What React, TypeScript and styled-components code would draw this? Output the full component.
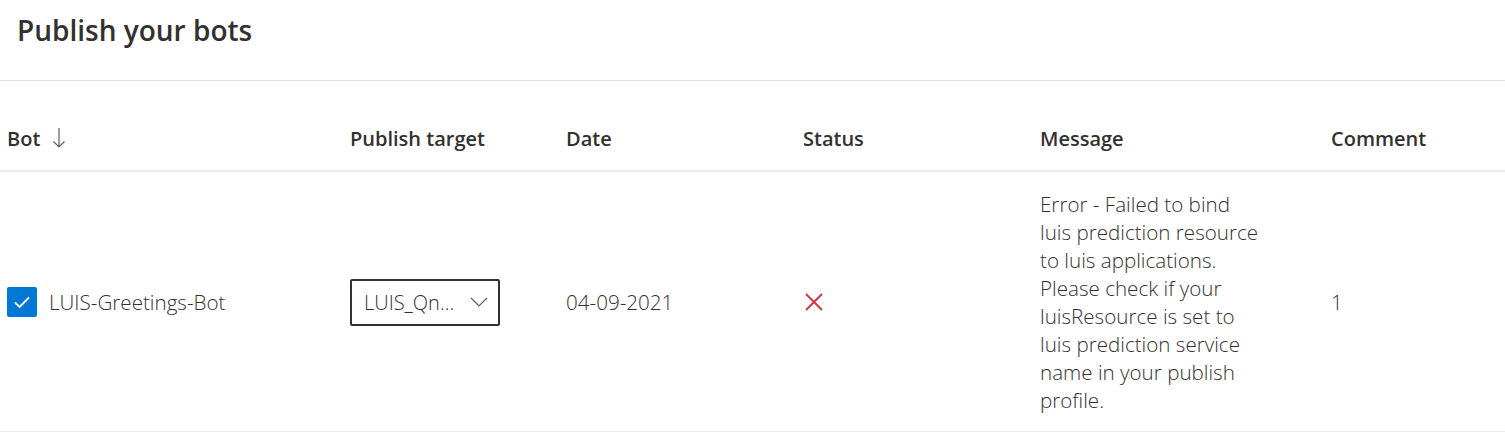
import styled, { createGlobalStyle } from "styled-components";

const GlobalStyle = createGlobalStyle`
  body {
    margin: 0;
    background: #ffffff;
    font-family: "Open Sans", "Noto Sans", sans-serif;
    color: #323130;
  }
`;

const columns = "343px 216px 237px 237px 291px 1fr";

const messageLines = [
  "Error - Failed to bind",
  "luis prediction resource",
  "to luis applications.",
  "Please check if your",
  "luisResource is set to",
  "luis prediction service",
  "name in your publish",
  "profile.",
];

export default function App() {
  return (
    <Page>
      <GlobalStyle />
      <TitleBar>
        <Title>Publish your bots</Title>
      </TitleBar>
      <Table>
        <HeaderRow>
          <HeaderCell>
            Bot
            <svg width="14" height="22" viewBox="0 0 14 22">
              <path
                d="M7 1 V20 M1.5 14.5 L7 20 L12.5 14.5"
                fill="none"
                stroke="#605e5c"
                strokeWidth="1.2"
              />
            </svg>
          </HeaderCell>
          <HeaderCell>Publish target</HeaderCell>
          <HeaderCell>Date</HeaderCell>
          <HeaderCell>Status</HeaderCell>
          <HeaderCell>Message</HeaderCell>
          <HeaderCell>Comment</HeaderCell>
        </HeaderRow>
        <BodyRow>
          <Cell>
            <Checkbox>
              <svg width="20" height="20" viewBox="0 0 20 20">
                <path
                  d="M3 10.5 L7.6 15 L17 5.5"
                  fill="none"
                  stroke="#fff"
                  strokeWidth="1.8"
                />
              </svg>
            </Checkbox>
            <span>LUIS-Greetings-Bot</span>
          </Cell>
          <Cell>
            <Dropdown>
              <span>LUIS_Qn...</span>
              <svg width="18" height="10" viewBox="0 0 18 10">
                <path d="M1 1 L9 9 L17 1" fill="none" stroke="#605e5c" strokeWidth="1.2" />
              </svg>
            </Dropdown>
          </Cell>
          <Cell>04-09-2021</Cell>
          <Cell>
            <svg width="18" height="18" viewBox="0 0 18 18" style={{ marginLeft: 2 }}>
              <path d="M1 1 L17 17 M17 1 L1 17" stroke="#d13438" strokeWidth="1.8" />
            </svg>
          </Cell>
          <Cell>
            <Message>
              {messageLines.map((line) => (
                <MessageLine key={line}>{line}</MessageLine>
              ))}
            </Message>
          </Cell>
          <Cell>1</Cell>
        </BodyRow>
      </Table>
    </Page>
  );
}

const Page = styled.div`
  width: 1505px;
  min-height: 433px;
  background: #fff;
`;

const TitleBar = styled.div`
  height: 81px;
  border-bottom: 1px solid #e1dfdd;
  padding: 9px 0 0 17px;
  box-sizing: border-box;
`;

const Title = styled.h1`
  margin: 0;
  font-size: 28px;
  font-weight: 570;
  line-height: 42px;
  color: #323130;
`;

const Table = styled.div`
  padding-top: 29px;
`;

const HeaderRow = styled.div`
  display: grid;
  grid-template-columns: ${columns};
  height: 60px;
  box-sizing: content-box;
  border-bottom: 2px solid #edebe9;
  padding-left: 7px;
`;

const HeaderCell = styled.div`
  display: flex;
  align-items: center;
  padding-bottom: 4px;
  font-size: 20px;
  font-weight: 600;
  color: #323130;
  gap: 12px;
`;

const BodyRow = styled.div`
  display: grid;
  grid-template-columns: ${columns};
  border-bottom: 1px solid #edebe9;
  padding: 18px 0 17px 7px;
`;

const Cell = styled.div`
  display: flex;
  align-items: center;
  font-size: 20.6px;
  font-weight: 350;
  color: #323130;
  gap: 12px;
`;

const Checkbox = styled.div`
  width: 30px;
  height: 30px;
  border-radius: 2px;
  background: #0078d4;
  display: flex;
  align-items: center;
  justify-content: center;
  flex-shrink: 0;
`;

const Dropdown = styled.div`
  width: 150px;
  height: 47px;
  box-sizing: border-box;
  border: 2px solid #323130;
  border-radius: 2px;
  display: flex;
  align-items: center;
  justify-content: space-between;
  padding: 0 10px 0 12px;
  font-size: 20px;
`;

const Message = styled.div`
  line-height: 28px;
`;

const MessageLine = styled.div`
  white-space: nowrap;
`;
